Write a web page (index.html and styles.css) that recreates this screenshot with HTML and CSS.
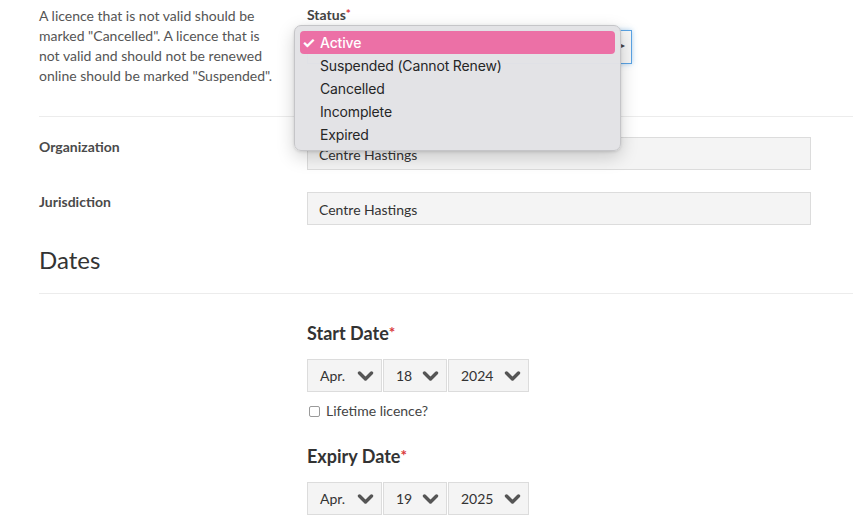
FILE: index.html
```html
<!DOCTYPE html>
<html lang="en">
<head>
<meta charset="utf-8">
<title>Licence</title>
<link rel="stylesheet" href="styles.css">
</head>
<body>
<div class="page">
  <div class="row row-status">
    <p class="help">A licence that is not valid should be marked "Cancelled". A licence that is not valid and should not be renewed online should be marked "Suspended".</p>
    <div class="field">
      <div class="label">Status<span class="req">*</span></div>
      <div class="status-select">
        <span class="arrow">&#9656;</span>
      </div>
      <ul class="menu">
        <li class="sel"><span class="check">&#10003;</span>Active</li>
        <li>Suspended (Cannot Renew)</li>
        <li>Cancelled</li>
        <li>Incomplete</li>
        <li>Expired</li>
      </ul>
    </div>
  </div>

  <div class="row row-input first">
    <div class="side-label">Organization</div>
    <div class="input">Centre Hastings</div>
  </div>
  <div class="row row-input">
    <div class="side-label">Jurisdiction</div>
    <div class="input">Centre Hastings</div>
  </div>

  <h2 class="section-title">Dates</h2>

  <div class="dates">
    <div class="date-label">Start Date<span class="req">*</span></div>
    <div class="date-selects">
      <div class="dsel w-month">Apr.<svg class="chev" viewBox="0 0 16 10"><path d="M2 2 L8 8 L14 2"/></svg></div>
      <div class="dsel w-day">18<svg class="chev" viewBox="0 0 16 10"><path d="M2 2 L8 8 L14 2"/></svg></div>
      <div class="dsel w-year">2024<svg class="chev" viewBox="0 0 16 10"><path d="M2 2 L8 8 L14 2"/></svg></div>
    </div>
    <label class="checkline"><span class="box"></span>Lifetime licence?</label>

    <div class="date-label second">Expiry Date<span class="req">*</span></div>
    <div class="date-selects">
      <div class="dsel w-month">Apr.<svg class="chev" viewBox="0 0 16 10"><path d="M2 2 L8 8 L14 2"/></svg></div>
      <div class="dsel w-day">19<svg class="chev" viewBox="0 0 16 10"><path d="M2 2 L8 8 L14 2"/></svg></div>
      <div class="dsel w-year">2025<svg class="chev" viewBox="0 0 16 10"><path d="M2 2 L8 8 L14 2"/></svg></div>
    </div>
  </div>
</div>
</body>
</html>
```

FILE: styles.css
```css
* { box-sizing: border-box; }
html, body { margin: 0; padding: 0; background: #fff; }
body {
  font-family: Lato, "Open Sans", sans-serif;
  color: #444;
  width: 853px;
  height: 525px;
  overflow: hidden;
}
.page { padding-left: 39px; }

.row {
  display: grid;
  grid-template-columns: 268px 504px;
}
.row-status {
  padding-top: 6px;
  border-bottom: 1px solid #ececec;
}
.help {
  margin: 0 0 30px 0;
  font-size: 14px;
  line-height: 20px;
  color: #555;
  width: 238px;
}
.field { position: relative; padding-top: 0; }
.label {
  margin-top: -1px;
  font-size: 14px;
  font-weight: 700;
  line-height: 20px;
  color: #444;
}
.req { color: #d9383a; font-weight: 700; font-size: 0.85em; vertical-align: top; position: relative; top: -1px; }
.status-select {
  margin-top: 5px;
  width: 325px;
  height: 34px;
  border: 1px solid #5aa3e4;
  box-shadow: 0 0 5px rgba(90, 163, 228, 0.5);
  background: #f6f6f6;
  position: relative;
}
.status-select .arrow {
  position: absolute;
  right: 6px;
  top: 9px;
  font-size: 8px;
  color: #444;
}
.menu {
  position: absolute;
  left: -13px;
  top: 19px;
  width: 327px;
  margin: 0;
  padding: 5px 5px 4px;
  list-style: none;
  background: rgba(226, 226, 230, 0.98);
  border: 1px solid #c5c5c8;
  border-radius: 7px;
  box-shadow: 0 6px 18px rgba(0,0,0,0.18), 0 1px 3px rgba(0,0,0,0.12);
  font-family: Inter, "Liberation Sans", sans-serif;
  font-size: 14px;
  color: #262626;
  z-index: 10;
}
.menu li {
  height: 23px;
  line-height: 23px;
  padding-left: 20px;
  border-radius: 4px;
  position: relative;
  letter-spacing: -0.15px;
}
.menu li.sel {
  background: #ec70a6;
  color: #fff;
  font-weight: 500;
}
.menu .check {
  position: absolute;
  left: 2px;
  top: 0;
  font-size: 15px;
  font-weight: 700;
}

.row-input { align-items: start; }
.row-input.first { margin-top: 20px; }
.row-input + .row-input { margin-top: 22px; }
.side-label {
  font-size: 14px;
  font-weight: 700;
  line-height: 20px;
  color: #4a4a4a;
}
.input {
  height: 33px;
  background: #f4f4f4;
  border: 1px solid #dcdcdc;
  font-size: 14px;
  line-height: 33px;
  padding-left: 11px;
  color: #333;
}

.section-title {
  margin: 20px 0 0;
  font-size: 24px;
  font-weight: 400;
  line-height: 30px;
  color: #333;
  padding-bottom: 18px;
  border-bottom: 1px solid #ececec;
}

.dates { padding-left: 268px; }
.date-label {
  margin-top: 27px;
  font-size: 18px;
  font-weight: 700;
  line-height: 24px;
  color: #333;
}
.date-label.second { margin-top: 23px; }
.date-selects {
  margin-top: 14px;
  display: flex;
}
.dsel {
  height: 33px;
  background: #f4f4f4;
  border: 1px solid #dcdcdc;
  display: flex;
  align-items: center;
  justify-content: space-between;
  padding: 0 7px 0 12px;
  font-size: 14px;
  color: #333;
}
.dsel + .dsel { margin-left: 1px; }
.w-month { width: 75px; }
.w-day { width: 64px; }
.w-year { width: 81px; }
.chev {
  width: 17px;
  height: 10px;
  fill: none;
  stroke: #555;
  stroke-width: 3.4;
  stroke-linecap: round;
  stroke-linejoin: round;
}
.checkline {
  display: flex;
  align-items: center;
  margin-top: 9px;
  font-size: 14px;
  line-height: 20px;
  color: #444;
}
.box {
  width: 11px;
  height: 11px;
  border: 1px solid #9a9a9a;
  border-radius: 2px;
  margin: 0 6px 0 2px;
  background: #fff;
}
```
